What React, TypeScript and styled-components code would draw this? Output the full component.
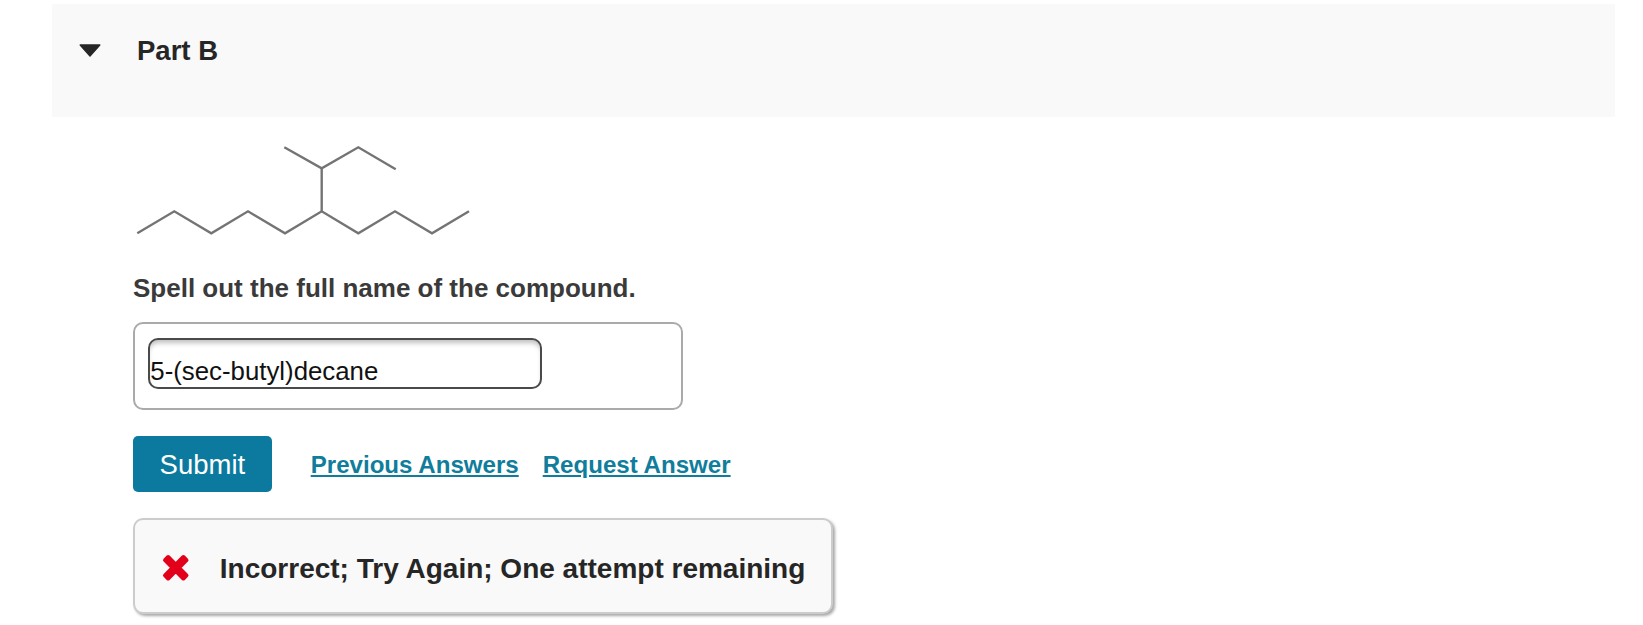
import type { FC } from 'react';
import styled, { createGlobalStyle } from 'styled-components';

const GlobalStyle = createGlobalStyle`
	body {
		margin: 0;
		background: #ffffff;
		font-family: 'Liberation Sans', Arial, sans-serif;
	}
`;

const MOLECULE_LINES = [
	'4.3,93.3 41.3,71.3 78.3,93.3 115,71.3 152,93.3 188.7,71.3 225.3,93.3 262,71.3 299,93.3 336,71.3',
	'188.7,71.3 188.7,28.3',
	'151.3,7.3 188.7,28.3 225.3,7.3 262.7,29.3',
];

const App: FC = () => {
	return (
		<Page>
			<GlobalStyle />
			<PartHeader>
				<Caret viewBox="0 0 22 13" aria-hidden="true">
					<path
						d="M1.2 1H20.8L11 12Z"
						fill="#262626"
						stroke="#262626"
						strokeWidth="1.4"
						strokeLinejoin="round"
					/>
				</Caret>
				<PartTitle>Part B</PartTitle>
			</PartHeader>
			<PartBody>
				<Molecule viewBox="0 0 340 100" aria-label="Structure of the compound">
					{MOLECULE_LINES.map((points) => (
						<polyline
							key={points}
							points={points}
							fill="none"
							stroke="#747474"
							strokeWidth="2.4"
						/>
					))}
				</Molecule>
				<Prompt>Spell out the full name of the compound.</Prompt>
				<AnswerBox>
					<AnswerInput readOnly value="5-(sec-butyl)decane" />
				</AnswerBox>
				<Actions>
					<SubmitButton type="button">Submit</SubmitButton>
					<ActionLinks>
						<ActionLink href="#">Previous Answers</ActionLink>
						<ActionLink href="#">Request Answer</ActionLink>
					</ActionLinks>
				</Actions>
				<Feedback>
					<FeedbackIcon viewBox="0 0 27 27" aria-hidden="true">
						<path
							d="M6 3L13.5 10.5L21 3L24 6L16.5 13.5L24 21L21 24L13.5 16.5L6 24L3 21L10.5 13.5L3 6Z"
							fill="#e2001a"
							stroke="#e2001a"
							strokeWidth="4"
							strokeLinejoin="round"
						/>
					</FeedbackIcon>
					<FeedbackText>Incorrect; Try Again; One attempt remaining</FeedbackText>
				</Feedback>
			</PartBody>
		</Page>
	);
};

export default App;

const Page = styled.div`
	box-sizing: border-box;
	width: 1643px;
	height: 625px;
	padding: 4px 28px 0 52px;
	overflow: hidden;
`;

const PartHeader = styled.header`
	display: flex;
	align-items: flex-start;
	box-sizing: border-box;
	height: 112.5px;
	padding: 31px 0 0 27px;
	background: #f9f9f9;
`;

const Caret = styled.svg`
	flex: none;
	width: 22px;
	height: 13px;
	margin-top: 9px;
`;

const PartTitle = styled.h2`
	margin: 0 0 0 36px;
	font-size: 27.5px;
	line-height: 32px;
	font-weight: 700;
	color: #262626;
`;

const PartBody = styled.div`
	display: flex;
	flex-direction: column;
	align-items: flex-start;
	padding-left: 81px;
`;

const Molecule = styled.svg`
	display: block;
	width: 340px;
	height: 100px;
	margin-top: 23.5px;
`;

const Prompt = styled.p`
	margin: 32.7px 0 0;
	font-size: 26px;
	line-height: 30px;
	font-weight: 700;
	color: #3a3a3a;
`;

const AnswerBox = styled.div`
	box-sizing: border-box;
	width: 550px;
	height: 87.4px;
	margin-top: 19.8px;
	padding: 13.8px 0 0 13.3px;
	border: 2px solid #aaaaaa;
	border-radius: 10px;
`;

const AnswerInput = styled.input`
	display: block;
	box-sizing: border-box;
	width: 393.4px;
	height: 51px;
	padding: 16px 0 0;
	border: 2px solid #4a4a4a;
	border-radius: 10px;
	outline: none;
	background: #ffffff;
	box-shadow: inset 0 5px 5px -2px rgba(0, 0, 0, 0.25);
	font-family: 'Liberation Sans', Arial, sans-serif;
	font-size: 25.8px;
	color: #111111;
`;

const Actions = styled.div`
	display: flex;
	align-items: center;
	margin-top: 26.6px;
`;

const SubmitButton = styled.button`
	box-sizing: border-box;
	width: 138.7px;
	height: 55.4px;
	padding: 2px 0 0;
	border: none;
	border-radius: 5px;
	background: #0c7a9e;
	color: #ffffff;
	font-family: 'Liberation Sans', Arial, sans-serif;
	font-size: 27.5px;
`;

const ActionLinks = styled.div`
	display: flex;
	gap: 24px;
	margin-left: 39px;
`;

const ActionLink = styled.a`
	font-size: 24.1px;
	line-height: 29px;
	font-weight: 700;
	color: #0f7d9b;
	text-decoration: underline;
	text-decoration-thickness: 2px;
	text-underline-offset: 2px;
`;

const Feedback = styled.div`
	display: flex;
	align-items: center;
	gap: 30px;
	box-sizing: border-box;
	width: 700px;
	height: 95.5px;
	margin-top: 26.6px;
	padding-left: 27.3px;
	border: 2px solid #cccccc;
	border-radius: 10px;
	background: #f9f9f9;
	box-shadow: 2px 2px 3px #a8a8a8;
`;

const FeedbackIcon = styled.svg`
	flex: none;
	width: 27.5px;
	height: 27.5px;
	margin-top: 4px;
`;

const FeedbackText = styled.span`
	padding-top: 5px;
	font-size: 28px;
	line-height: 32px;
	font-weight: 700;
	color: #262626;
	white-space: nowrap;
`;
